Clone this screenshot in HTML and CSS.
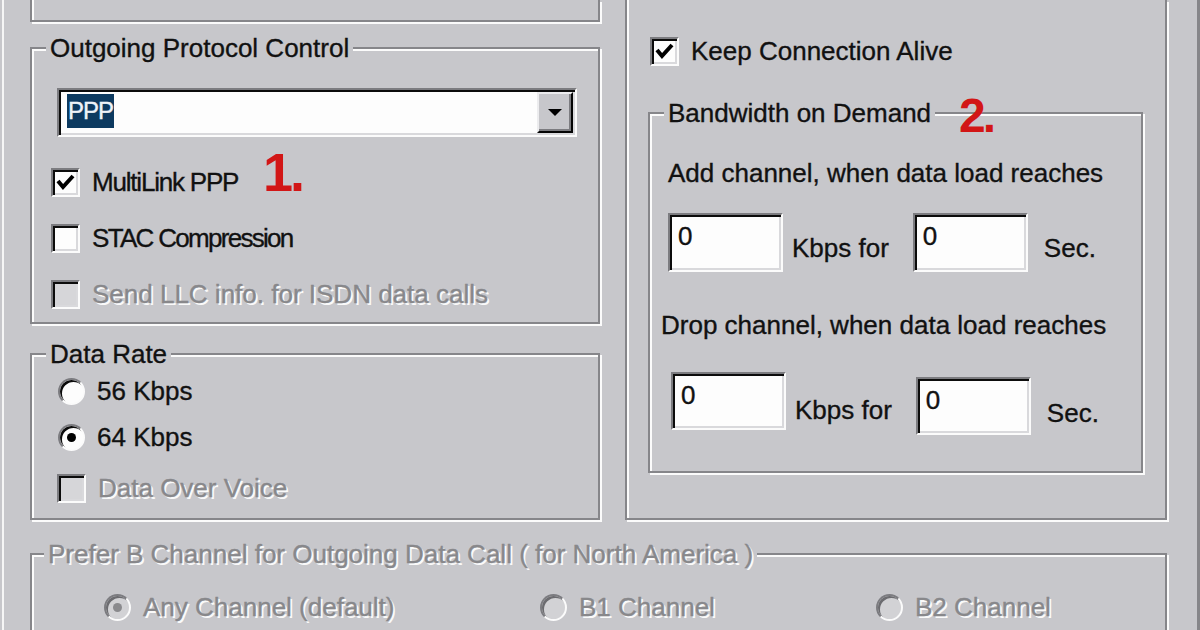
FILE: index.html
```html
<!DOCTYPE html>
<html lang="en">
<head>
    <meta charset="utf-8"/>
    <title>ISDN Settings</title>
    <link rel="stylesheet" href="styles.css">
</head>
<body>
<div class="dialog">
    <div class="columns">
        <div class="col-left">
            <div class="group stub"></div>

            <fieldset class="group outgoing">
                <legend>Outgoing Protocol Control</legend>
                <div class="body">
                    <div class="combo">
                        <div class="combo-text"><span class="sel">PPP</span></div>
                        <div class="combo-btn">
                            <svg width="14" height="8" viewBox="0 0 14 8"><polygon points="0,0 14,0 7,7" fill="#000"/></svg>
                        </div>
                    </div>
                    <label class="opt check-row">
                        <span class="check"><svg viewBox="0 0 25 25"><polyline points="5,11 10,17 20,6" fill="none" stroke="#000" stroke-width="4"/></svg></span>
                        <span class="txt tight">MultiLink PPP</span>
                        <span class="mark one">1.</span>
                    </label>
                    <label class="opt check-row">
                        <span class="check"></span>
                        <span class="txt tighter">STAC Compression</span>
                    </label>
                    <label class="opt check-row disabled">
                        <span class="check"></span>
                        <span class="txt">Send LLC info. for ISDN data calls</span>
                    </label>
                </div>
            </fieldset>

            <fieldset class="group rate">
                <legend>Data Rate</legend>
                <div class="body">
                    <label class="opt radio-row">
                        <span class="radio"></span>
                        <span class="txt">56 Kbps</span>
                    </label>
                    <label class="opt radio-row">
                        <span class="radio on"></span>
                        <span class="txt">64 Kbps</span>
                    </label>
                    <label class="opt radio-row dov disabled">
                        <span class="check"></span>
                        <span class="txt">Data Over Voice</span>
                    </label>
                </div>
            </fieldset>
        </div>

        <div class="group panel">
            <label class="opt keep">
                <span class="check"><svg viewBox="0 0 25 25"><polyline points="5,11 10,17 20,6" fill="none" stroke="#000" stroke-width="4"/></svg></span>
                <span class="txt">Keep Connection Alive</span>
            </label>

            <fieldset class="group bod">
                <legend>Bandwidth on Demand<span class="mark two">2.</span></legend>
                <div class="body">
                    <div class="line">Add channel, when data load reaches</div>
                    <div class="load-row">
                        <div class="field">0</div>
                        <span class="unit">Kbps for</span>
                        <div class="field">0</div>
                        <span class="unit sec">Sec.</span>
                    </div>
                    <div class="line drop">Drop channel, when data load reaches</div>
                    <div class="load-row second">
                        <div class="field">0</div>
                        <span class="unit">Kbps for</span>
                        <div class="field low">0</div>
                        <span class="unit sec">Sec.</span>
                    </div>
                </div>
            </fieldset>
        </div>
    </div>

    <fieldset class="group prefer disabled">
        <legend>Prefer B Channel for Outgoing Data Call ( for North America )</legend>
        <div class="body">
            <label class="opt">
                <span class="radio on"></span>
                <span class="txt">Any Channel (default)</span>
            </label>
            <label class="opt">
                <span class="radio"></span>
                <span class="txt">B1 Channel</span>
            </label>
            <label class="opt">
                <span class="radio"></span>
                <span class="txt">B2 Channel</span>
            </label>
        </div>
    </fieldset>
</div>
</body>
</html>
```

FILE: styles.css
```css
* {
    box-sizing: border-box;
}
html, body {
    margin: 0;
    padding: 0;
}
body {
    background-color: #c7c7cb;
    font-family: "Liberation Sans", Arial, sans-serif;
    font-size: 26px;
    line-height: 30px;
    color: #111;
    -webkit-text-stroke: 0.35px currentColor;
}
.dialog {
    width: 1200px;
    height: 630px;
    overflow: hidden;
    padding-left: 30px;
    box-shadow: inset 2px 0 0 #c7c7cb, inset 4px 0 0 #f6f6f6, inset -3px 0 0 #86868a;
}
.columns {
    display: flex;
    gap: 25px;
}
.col-left {
    width: 570px;
    display: flex;
    flex-direction: column;
}

/* etched group boxes */
.group {
    margin: 0;
    padding: 0;
    min-width: 0;
    border: 2px solid #86868a;
    box-shadow: 2px 2px 0 #fbfbfb, inset 2px 2px 0 #fbfbfb;
}
.group legend {
    margin-left: 14px;
    padding: 0 4px;
    line-height: 28px;
    background-color: #c7c7cb;
}
.stub {
    height: 22px;
    border-top: 0;
    box-shadow: 2px 2px 0 #fbfbfb, inset 2px 0 0 #fbfbfb;
}
.panel {
    width: 542px;
    border-top: 0;
    box-shadow: 2px 2px 0 #fbfbfb, inset 2px 0 0 #fbfbfb;
    padding: 36px 22px 0 21px;
}

/* options */
.opt {
    display: flex;
    align-items: center;
}
.opt .txt {
    margin-left: 12px;
    white-space: nowrap;
}
.tight {
    letter-spacing: -1.2px;
}
.tighter {
    letter-spacing: -1.7px;
}
.disabled .txt,
.prefer legend {
    color: #88888b;
    text-shadow: 2px 2px 0 #fafafa;
}
.check {
    width: 29px;
    height: 29px;
    flex: none;
    background: #fdfdfd;
    border: 2px solid;
    border-color: #7c7c80 #fbfbfb #fbfbfb #7c7c80;
    box-shadow: inset 2px 2px 0 #0c0c0c, inset -2px -2px 0 #d9d9dc;
}
.check svg {
    display: block;
    width: 25px;
    height: 25px;
}
.disabled .check {
    background: #d6d6d9;
}
.radio {
    position: relative;
    width: 27px;
    height: 27px;
    flex: none;
    border-radius: 50%;
    background: #fdfdfd;
    border: 2px solid;
    border-color: #7c7c80 #fbfbfb #fbfbfb #7c7c80;
    box-shadow: inset 2px 2px 0 #0c0c0c;
}
.radio.on::after {
    content: "";
    position: absolute;
    left: 7px;
    top: 7px;
    width: 9px;
    height: 9px;
    border-radius: 50%;
    background: #000;
}
.disabled .radio {
    background: #d2d2d5;
    box-shadow: inset 2px 2px 0 #6c6c70;
}
.disabled .radio.on::after {
    background: #8a8a8d;
}

/* red annotations */
.mark {
    position: absolute;
    font-weight: bold;
    color: #d21616;
    line-height: 1;
    -webkit-text-stroke: 0;
}
.mark.one {
    font-size: 54px;
    letter-spacing: -3px;
    left: 212px;
    top: -9px;
}
.mark.two {
    font-size: 48px;
    letter-spacing: -3px;
    left: calc(100% + 24px);
    top: -7px;
}

/* outgoing protocol */
.outgoing {
    margin-top: 12px;
}
.outgoing .body {
    padding: 26px 0 0 19px;
}
.combo {
    display: flex;
    width: 520px;
    height: 49px;
    margin: 0 0 17px 6px;
    background: #fdfdfd;
    border: 2px solid;
    border-color: #7c7c80 #fbfbfb #fbfbfb #7c7c80;
    box-shadow: inset 2px 2px 0 #0c0c0c, inset -2px -2px 0 #d9d9dc;
    padding: 2px;
}
.combo-text {
    flex: 1;
    padding: 2px 0 0 6px;
}
.sel {
    display: inline-block;
    height: 34px;
    line-height: 34px;
    padding: 0 1px;
    font-size: 24px;
    letter-spacing: -1px;
    background: #0d3a60;
    color: #eef3f8;
}
.combo-btn {
    width: 36px;
    display: flex;
    align-items: center;
    justify-content: center;
    background: #c7c7cb;
    border: 2px solid;
    border-color: #ececee #050505 #050505 #ececee;
    box-shadow: inset -2px -2px 0 #7c7c80;
}
.check-row {
    position: relative;
    height: 56px;
}

/* data rate */
.rate {
    margin-top: 16px;
}
.rate .body {
    padding: 0 0 7px 26px;
}
.radio-row {
    height: 46px;
}
.dov {
    margin-top: 5px;
}
.dov .check {
    margin-left: -1px;
}

/* keep alive + bandwidth */
.keep {
    height: 30px;
    margin-left: 2px;
}
.bod {
    margin-top: 33px;
}
.bod legend {
    position: relative;
}
.bod .body {
    padding: 31px 0 36px 18px;
}
.line {
    white-space: nowrap;
}
.line.drop {
    margin: 38px 0 0 -7px;
}
.load-row {
    display: flex;
    align-items: flex-start;
    margin-top: 25px;
}
.load-row.second {
    margin: 32px 0 0 3px;
}
.field {
    width: 115px;
    height: 59px;
    background: #fdfdfd;
    border: 2px solid;
    border-color: #7c7c80 #fbfbfb #fbfbfb #7c7c80;
    box-shadow: inset 2px 2px 0 #0c0c0c, inset -2px -2px 0 #d9d9dc;
    padding: 6px 0 0 8px;
}
.second .field {
    height: 58px;
}
.field.low {
    margin-top: 5px;
}
.unit {
    margin: 20px 24px 0 9px;
    white-space: nowrap;
}
.unit.sec {
    margin: 20px 0 0 16px;
}
.second .unit {
    margin-top: 23px;
}
.second .unit.sec {
    margin-top: 26px;
}

/* prefer b channel */
.prefer {
    width: 1137px;
    margin-top: 20px;
}
.prefer legend {
    margin-left: 12px;
}
.prefer .body {
    display: grid;
    grid-template-columns: 436px 336px auto;
    padding: 24px 0 30px 72px;
}
.prefer .opt {
    height: 30px;
}
```
